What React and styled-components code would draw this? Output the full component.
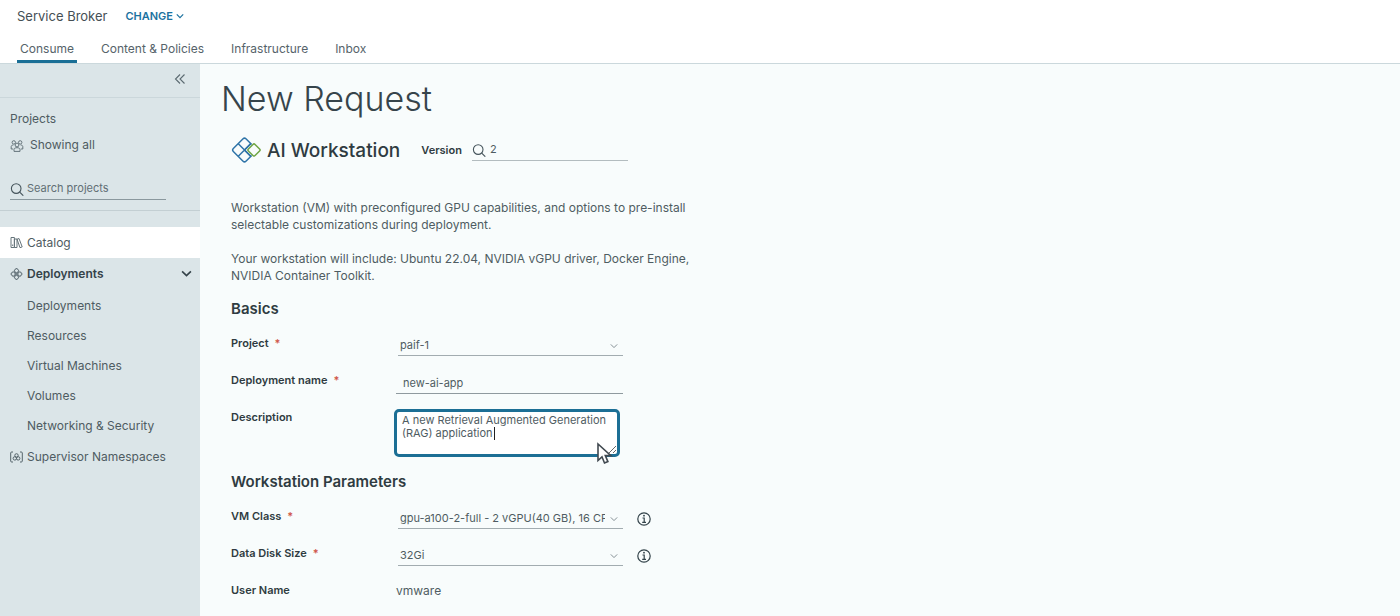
import React from "react";
import styled, { createGlobalStyle } from "styled-components";

const tabs = ["Consume", "Content & Policies", "Infrastructure", "Inbox"];

const deploymentLinks = [
  "Deployments",
  "Resources",
  "Virtual Machines",
  "Volumes",
  "Networking & Security",
];

const Chevron = ({ size = 8, width = 1.5 }) => (
  <svg width={size} height={size} viewBox="0 0 10 10" fill="none" stroke="currentColor" strokeWidth={width}>
    <path d="M1 3l4 4 4-4" />
  </svg>
);

const SearchIcon = () => (
  <svg width="14" height="14" viewBox="0 0 14 14" fill="none" stroke="#45545b" strokeWidth="1.1">
    <circle cx="6.2" cy="6.6" r="4.8" />
    <path d="M9.7 10.1l3.6 3.6" />
  </svg>
);

const CollapseIcon = () => (
  <svg width="12" height="12" viewBox="0 0 12 12" fill="none" stroke="#5b6a71" strokeWidth="1.1">
    <path d="M6 1.5L1.5 6 6 10.5M10.5 1.5L6 6l4.5 4.5" />
  </svg>
);

const UsersIcon = () => (
  <svg width="14" height="14" viewBox="0 0 14 14" fill="none" stroke="#65747b" strokeWidth="1">
    <circle cx="3.8" cy="4.4" r="1.7" />
    <circle cx="10.2" cy="4.4" r="1.7" />
    <circle cx="7" cy="7" r="1.9" />
    <path d="M4 13.400v-1.800c0-1.300 1.200-1.900 3-1.900s3 .6 3 1.900v1.800zM3.200 11H1.200V8.600c0-1 .8-1.500 2.200-1.600M10.800 11h2V8.600c0-1-.8-1.500-2.200-1.600" />
  </svg>
);

const CatalogIcon = () => (
  <svg width="13" height="13" viewBox="0 0 13 13" fill="none" stroke="#65747b" strokeWidth="1">
    <path d="M1 1.500h3.400v10H1zM4.400 3h2.600v8.500H4.400zM7 3.200l2-.7 3.200 8.400-2.200.8z" />
    <path d="M2.700 8.500v1.500" />
  </svg>
);

const DeploymentsIcon = () => (
  <svg width="13" height="12" viewBox="0 0 13 12" fill="none" stroke="#65747b" strokeWidth="1">
    <rect x="4.700" y=".9" width="3.600" height="3.600" rx="1" transform="rotate(45 6.500 2.700)" />
    <rect x="4.700" y="7.500" width="3.600" height="3.600" rx="1" transform="rotate(45 6.500 9.300)" />
    <rect x="1.400" y="4.200" width="3.600" height="3.600" rx="1" transform="rotate(45 3.200 6)" />
    <rect x="8" y="4.200" width="3.600" height="3.600" rx="1" transform="rotate(45 9.800 6)" />
    <path d="M4.800 4.300l3.400 3.400M8.200 4.300L4.800 7.700" />
  </svg>
);

const NamespaceIcon = () => (
  <svg width="13" height="12" viewBox="0 0 13 12" fill="none" stroke="#55646b" strokeWidth="1">
    <path d="M3 1H1.700a1 1 0 0 0-1 1v8a1 1 0 0 0 1 1H3M10 1h1.300a1 1 0 0 1 1 1v8a1 1 0 0 1-1 1H10" />
    <circle cx="6.500" cy="4.400" r="1.700" />
    <circle cx="4.800" cy="7.400" r="1.700" />
    <circle cx="8.200" cy="7.400" r="1.700" />
  </svg>
);

const WorkstationLogo = () => (
  <svg width="30" height="28" viewBox="0 0 30 28" fill="none" strokeWidth="1.500">
    <g stroke="#2f74a8">
      <rect x="4.600" y="5.100" width="17.800" height="17.800" rx="2" transform="rotate(45 13.500 14)" />
      <path d="M7.300 7.800l12.400 12.400M19.700 7.800L7.300 20.200" />
    </g>
    <path d="M23 6l7 8-7 8-8-8z" fill="#f8fcfc" />
    <rect x="18.300" y="9.300" width="9.400" height="9.400" rx="1.500" transform="rotate(45 23 14)" stroke="#6fa544" />
    <path d="M13.500 14l6.400-6.400M13.500 14l6.400 6.400" stroke="#2f74a8" />
  </svg>
);

const InfoIcon = () => (
  <svg width="14" height="14" viewBox="0 0 14 14" fill="none" stroke="#33434a" strokeWidth="1.200">
    <circle cx="7" cy="7" r="6.200" />
    <path d="M5.500 6h1.700v4.200M5.200 10.300h3.800" />
    <circle cx="7" cy="3.700" r=".9" fill="#33434a" stroke="none" />
  </svg>
);

const Pointer = () => (
  <PointerStyled width="18" height="24" viewBox="0 0 18 24">
    <path d="M2 2v16.500l4-3.700 2.500 6.200 3.400-1.400-2.600-6h5.600z" fill="#fff" stroke="#414950" strokeWidth="1.600" />
  </PointerStyled>
);

const Field = ({ id, label, required, children }) => (
  <FieldRow>
    <FieldLabel htmlFor={id}>
      {label}
      {required && <Required>*</Required>}
    </FieldLabel>
    {children}
  </FieldRow>
);

const SelectField = ({ id, value, info }) => (
  <>
    <SelectWrap>
      <Select id={id} defaultValue={value}>
        <option>{value}</option>
      </Select>
      <SelectArrow>
        <Chevron width={1.2} />
      </SelectArrow>
    </SelectWrap>
    {info && (
      <InfoButton aria-label="Info">
        <InfoIcon />
      </InfoButton>
    )}
  </>
);

const Sidebar = () => (
  <SidebarStyled>
    <CollapseRow>
      <IconButton aria-label="Collapse">
        <CollapseIcon />
      </IconButton>
    </CollapseRow>
    <ProjectsPanel>
      <p>Projects</p>
      <ShowingAll>
        <UsersIcon />
        <span>Showing all</span>
      </ShowingAll>
      <ProjectSearch>
        <SearchIcon />
        <input aria-label="Search projects" placeholder="Search projects" />
      </ProjectSearch>
    </ProjectsPanel>
    <Nav>
      <NavItem href="#catalog" $active>
        <CatalogIcon />
        Catalog
      </NavItem>
      <NavItem href="#deployments" $bold>
        <DeploymentsIcon />
        <span>Deployments</span>
        <Chevron size={11} />
      </NavItem>
      <NestedNav>
        {deploymentLinks.map((link) => (
          <NavItem key={link} href={`#${link}`} $nested>
            {link}
          </NavItem>
        ))}
      </NestedNav>
      <NavItem href="#namespaces">
        <NamespaceIcon />
        Supervisor Namespaces
      </NavItem>
    </Nav>
  </SidebarStyled>
);

const RequestForm = () => (
  <Main>
    <h1>New Request</h1>
    <Content>
      <ProductRow>
        <WorkstationLogo />
        <h2>AI Workstation</h2>
        <label htmlFor="version">Version</label>
        <VersionBox>
          <SearchIcon />
          <input id="version" defaultValue="2" />
        </VersionBox>
      </ProductRow>
      <Description>
        <p>
          Workstation (VM) with preconfigured GPU capabilities, and options to pre-install
          <br />
          selectable customizations during deployment.
        </p>
        <p>
          Your workstation will include: Ubuntu 22.04, NVIDIA vGPU driver, Docker Engine,
          <br />
          NVIDIA Container Toolkit.
        </p>
      </Description>

      <h3>Basics</h3>
      <Field id="project" label="Project" required>
        <SelectField id="project" value="paif-1" />
      </Field>
      <Field id="name" label="Deployment name" required>
        <TextInput id="name" defaultValue="new-ai-app" />
      </Field>
      <Field id="description" label="Description">
        <TextAreaWrap>
          <TextArea id="description" defaultValue={"A new Retrieval Augmented Generation\n(RAG) application"} />
          <Caret />
          <Pointer />
        </TextAreaWrap>
      </Field>

      <h3>Workstation Parameters</h3>
      <Field id="vm-class" label="VM Class" required>
        <SelectField id="vm-class" value="gpu-a100-2-full - 2 vGPU(40 GB), 16 CPUs" info />
      </Field>
      <Field id="disk" label="Data Disk Size" required>
        <SelectField id="disk" value="32Gi" info />
      </Field>
      <Field id="user" label="User Name">
        <Output id="user">vmware</Output>
      </Field>
    </Content>
  </Main>
);

export default function App() {
  return (
    <Page>
      <GlobalStyle />
      <Header>
        <Brand>
          <span>Service Broker</span>
          <ChangeButton>
            CHANGE <Chevron />
          </ChangeButton>
        </Brand>
        <Tabs>
          {tabs.map((tab, i) => (
            <Tab key={tab} href={`#${tab}`} $active={i === 0}>
              {tab}
            </Tab>
          ))}
        </Tabs>
      </Header>
      <Body>
        <Sidebar />
        <RequestForm />
      </Body>
    </Page>
  );
}

const GlobalStyle = createGlobalStyle`
  * {
    box-sizing: border-box;
  }

  body {
    margin: 0;
    color: #4f5c62;
    font-family: Inter, "Liberation Sans", sans-serif;
    font-size: 12px;
    line-height: 17px;
  }

  h1, h2, h3, p {
    margin: 0;
  }

  button, input, select, textarea {
    margin: 0;
    padding: 0;
    border: 0;
    border-radius: 0;
    outline: 0;
    background: none;
    color: inherit;
    font: inherit;
    font-size: 11px;
  }
`;

const Page = styled.div`
  display: flex;
  flex-direction: column;
  height: 100vh;
  overflow: hidden;
`;

const Header = styled.header`
  flex: none;
  background: #fff;
  border-bottom: 1px solid #cbd8dc;
`;

const Brand = styled.div`
  display: flex;
  align-items: center;
  gap: 18px;
  height: 32px;
  padding: 0 17px;
  color: #454f54;
  font-size: 13px;
`;

const ChangeButton = styled.button`
  display: flex;
  align-items: center;
  gap: 3px;
  color: #1c729f;
  font-weight: 600;
`;

const Tabs = styled.nav`
  display: flex;
  gap: 21px;
  padding: 0 17px;
`;

const Tab = styled.a`
  height: 31px;
  padding: 8px 3px 0;
  border-bottom: 3px solid ${({ $active }) => ($active ? "#1a6f96" : "transparent")};
  color: #56636a;
  text-decoration: none;
`;

const Body = styled.div`
  display: flex;
  flex: 1;
  min-height: 0;
`;

const SidebarStyled = styled.aside`
  flex: none;
  width: 200px;
  background: #dbe5e8;
`;

const CollapseRow = styled.div`
  display: flex;
  align-items: center;
  justify-content: flex-end;
  height: 34px;
  padding: 0 14px 4px;
  border-bottom: 1px solid #cbd7db;
`;

const IconButton = styled.button`
  display: flex;
`;

const ProjectsPanel = styled.div`
  padding: 12px 10px 10px;
  border-bottom: 1px solid #c3cfd3;
`;

const ShowingAll = styled.div`
  display: flex;
  align-items: center;
  gap: 6px;
  margin-top: 9px;
`;

const ProjectSearch = styled.div`
  display: flex;
  align-items: center;
  gap: 3px;
  width: 156px;
  height: 22px;
  margin-top: 25px;
  border-bottom: 1px solid #8a989e;

  input {
    min-width: 0;
    flex: 1;
  }

  input::placeholder {
    color: #626f75;
    opacity: 1;
  }
`;

const Nav = styled.nav`
  display: flex;
  flex-direction: column;
  padding-top: 16px;
`;

const NestedNav = styled.div`
  padding: 1px 0;
`;

const NavItem = styled.a`
  display: flex;
  align-items: center;
  gap: 4px;
  height: ${({ $nested }) => ($nested ? 30 : 31)}px;
  padding: 0 8px 0 ${({ $nested }) => ($nested ? 27 : 10)}px;
  background: ${({ $active }) => ($active ? "#fff" : "transparent")};
  color: ${({ $bold }) => ($bold ? "#35434a" : "#4f5c62")};
  font-weight: ${({ $bold }) => ($bold ? 600 : 400)};
  text-decoration: none;

  span {
    flex: 1;
  }
`;

const Main = styled.main`
  flex: 1;
  min-width: 0;
  padding: 14px 21px;
  background: #f8fcfc;

  h1 {
    color: #36444b;
    font-size: 34px;
    font-weight: 300;
    line-height: 42px;
  }
`;

const Content = styled.div`
  padding-left: 10px;

  h3 {
    color: #2f3b41;
    font-size: 15px;
    font-weight: 600;
    line-height: 20px;
    margin: 15px 0;
  }
`;

const ProductRow = styled.div`
  display: flex;
  align-items: center;
  height: 32px;
  margin-top: 14px;

  h2 {
    margin-left: 6px;
    color: #2f3b41;
    font-size: 19px;
    font-weight: 500;
  }

  label {
    margin: 0 10px 0 21px;
    color: #2f3b41;
    font-size: 11px;
    font-weight: 600;
  }
`;

const VersionBox = styled.div`
  display: flex;
  align-items: center;
  gap: 4px;
  width: 156px;
  height: 22px;
  border-bottom: 1px solid #b3bcbf;

  input {
    min-width: 0;
    flex: 1;
  }
`;

const Description = styled.div`
  display: flex;
  flex-direction: column;
  gap: 17px;
  margin-top: 33px;
`;

const FieldRow = styled.div`
  display: flex;
  align-items: flex-start;
  min-height: 37px;
`;

const FieldLabel = styled.label`
  width: 163px;
  padding-top: 1px;
  color: #2f3b41;
  font-size: 11px;
  font-weight: 600;
`;

const Required = styled.span`
  margin-left: 6px;
  color: #d0574a;
`;

const SelectWrap = styled.div`
  position: relative;
  width: 225px;
  margin-left: 4px;
`;

const Select = styled.select`
  display: block;
  width: 100%;
  height: 22px;
  padding: 1px 18px 0 2px;
  border-bottom: 1px solid #a2acb0;
  appearance: none;
`;

const SelectArrow = styled.span`
  position: absolute;
  top: 8px;
  right: 5px;
  display: flex;
  color: #7f8b90;
  pointer-events: none;
`;

const InfoButton = styled.button`
  display: flex;
  margin: 5px 0 0 14px;
`;

const TextInput = styled.input`
  width: 227px;
  height: 23px;
  margin-left: 2px;
  padding: 2px 7px 0;
  border-bottom: 1px solid #8f9a9f;
`;

const TextAreaWrap = styled.div`
  position: relative;
  width: 226px;
  margin-top: 1px;
`;

const TextArea = styled.textarea`
  display: block;
  width: 100%;
  height: 48px;
  padding: 2px 5px;
  border: 3px solid #1c6f95;
  border-radius: 5px;
  background: #fff;
  line-height: 13px;
  overflow: hidden;
`;

const Caret = styled.span`
  position: absolute;
  top: 18px;
  left: 100px;
  width: 1px;
  height: 13px;
  background: #222;
`;

const PointerStyled = styled.svg`
  position: absolute;
  top: 33px;
  right: 6px;
`;

const Output = styled.output`
  margin-left: 2px;
  padding-top: 1px;
`;
